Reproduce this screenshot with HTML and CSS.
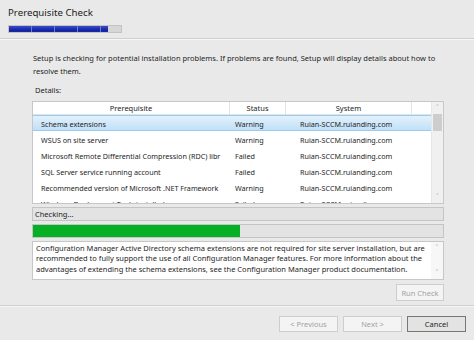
FILE: index.html
```html
<!DOCTYPE html>
<html><head><meta charset="UTF-8" /><link rel="stylesheet" href="styles.css"></head>
<body>
<div class="wizard">
	<div class="top">
		<div class="title">Prerequisite Check</div>
		<div class="steps">
			<span class="seg"></span><span class="seg"></span><span class="seg"></span><span class="seg"></span><span class="seg short"></span>
		</div>
	</div>
	<div class="main">
		<p class="intro">Setup is checking for potential installation problems. If problems are found, Setup will display details about how to resolve them.</p>
		<div class="label">Details:</div>
		<div class="list">
			<div class="cols">
				<div class="head">
					<span class="c1 hc">Prerequisite</span><span class="c2 hc">Status</span><span class="c3 hc">System</span><span class="c4"></span>
				</div>
				<div class="row sel"><span class="c1">Schema extensions</span><span class="c2">Warning</span><span class="c3">Ruian-SCCM.ruianding.com</span></div>
				<div class="row"><span class="c1">WSUS on site server</span><span class="c2">Warning</span><span class="c3">Ruian-SCCM.ruianding.com</span></div>
				<div class="row"><span class="c1">Microsoft Remote Differential Compression (RDC) libr</span><span class="c2">Failed</span><span class="c3">Ruian-SCCM.ruianding.com</span></div>
				<div class="row"><span class="c1">SQL Server service running account</span><span class="c2">Failed</span><span class="c3">Ruian-SCCM.ruianding.com</span></div>
				<div class="row"><span class="c1">Recommended version of Microsoft .NET Framework</span><span class="c2">Warning</span><span class="c3">Ruian-SCCM.ruianding.com</span></div>
				<div class="row"><span class="c1">Windows Deployment Tools installed</span><span class="c2">Failed</span><span class="c3">Ruian-SCCM.ruianding.com</span></div>
			</div>
			<div class="vscroll">
				<span class="arrow">&#x2c4;</span>
				<span class="thumb"></span>
				<span class="fill"></span>
				<span class="arrow">&#x2c5;</span>
			</div>
		</div>
		<div class="status">Checking...</div>
		<div class="meter"><div class="bar" style="width: 50.5%"></div></div>
		<div class="desc">
			<div class="desc-text">Configuration Manager Active Directory schema extensions are not required for site server installation, but are recommended to fully support the use of all Configuration Manager features. For more information about the advantages of extending the schema extensions, see the Configuration Manager product documentation.</div>
			<div class="vscroll light"><span class="arrow">&#x2c4;</span><span class="fill"></span><span class="arrow">&#x2c5;</span></div>
		</div>
		<div class="run"><button class="btn off">Run Check</button></div>
	</div>
	<div class="foot">
		<button class="btn off wide">&lt; Previous</button>
		<button class="btn off wide">Next &gt;</button>
		<button class="btn wide cancel">Cancel</button>
	</div>
</div>
</body></html>
```

FILE: styles.css
```css
* { box-sizing: border-box; }
html, body { margin: 0; padding: 0; }
body { width: 474px; height: 340px; overflow: hidden; background: #e9e9e9;
	font-family: "Segoe UI", "Noto Sans", sans-serif; color: #1e1e1e; font-size: 7.5px;
}
.wizard { display: flex; flex-direction: column; height: 340px; }
.top { padding: 5px 8px 0 8px; height: 39px; border-bottom: 1px solid #cfcfcf;
	box-shadow: 0 1px 0 #f7f7f7; }
.title { font-size: 9.7px; line-height: 16px; color: #222; }
.steps { display: flex; width: 114px; height: 8px; margin-top: 4px; background: #d6d6d6;
	border: 1px solid #c3c3c3; }
.seg { width: 23px; height: 6px; background: linear-gradient(#3a4ccc, #15239e 70%, #1a2ab0);
	border-right: 1px solid #6f7bd0; }
.seg.short { width: 7px; border-right: none; }
.main { padding: 13px 30px 0 32px; height: 267px; border-bottom: 1px solid #cfcfcf;
	box-shadow: 0 1px 0 #f7f7f7; }
.intro { margin: 0 0 0 1px; line-height: 12.5px; }
.label { margin: 8px 0 0 3px; line-height: 10px; }
.list { display: flex; height: 103px; margin-top: 6px; background: #fff; border: 1px solid #c7c7c7;
	overflow: hidden; }
.cols { flex: 1; overflow: hidden; }
.head { display: flex; height: 13px; line-height: 12px; border-bottom: 1px solid #e3e3e3; }
.hc { text-align: center; border-right: 1px solid #e3e3e3; }
.row { display: flex; height: 16px; line-height: 16px; font-size: 7.2px;
	border-top: 1px solid transparent; border-bottom: 1px solid transparent; }
.row span { white-space: nowrap; overflow: hidden; }
.row.sel { background: linear-gradient(#e3f1fc, #c0e0f8); border-color: #98cdf1; }
.c1 { width: 197px; }
.row .c1 { padding-left: 8px; }
.c2 { width: 56px; }
.row .c2 { padding-left: 5px; }
.c3 { width: 126px; }
.row .c3 { padding-left: 14px; }
.c4 { flex: 1; }
.vscroll { width: 12px; display: flex; flex-direction: column; background: #f0f0f0;
	border-left: 1px solid #e6e6e6; }
.vscroll .arrow { height: 12px; line-height: 12px; text-align: center; font-size: 8px; color: #a0a0a0; }
.vscroll .thumb { height: 17px; background: #cdcdcd; margin: 0 1px; }
.vscroll .fill { flex: 1; }
.vscroll.light { background: #f7f7f7; border-left: none; }
.status { margin-top: 3px; height: 14px; line-height: 12px; padding-left: 2px; background: #e3e3e3;
	border: 1px solid #c4c4c4; }
.meter { margin-top: 3px; height: 14px; background: #e3e3e3; border: 1px solid #c4c4c4; }
.bar { height: 12px; background: #06b025; }
.desc { display: flex; margin-top: 3px; height: 39px; background: #fff; border: 1px solid #c7c7c7; }
.desc-text { flex: 1; padding: 1px 3px 0 3px; line-height: 10.3px; }
.run { display: flex; justify-content: flex-end; margin-top: 4px; }
.btn { font-family: inherit; font-size: 7.5px; height: 17px; padding: 0; width: 48px; background: #eaeaea;
	border: 1px solid #acacac; color: #333; }
.btn.off { background: #f4f4f4; border-color: #cdcdcd; color: #a2a2a2; }
.foot { display: flex; justify-content: flex-end; gap: 5px; padding: 10px 8px 0 0; }
.btn.wide { width: 59px; height: 16px; }
.cancel { background: #e3e3e3; border-color: #777; color: #1e1e1e; }
```
